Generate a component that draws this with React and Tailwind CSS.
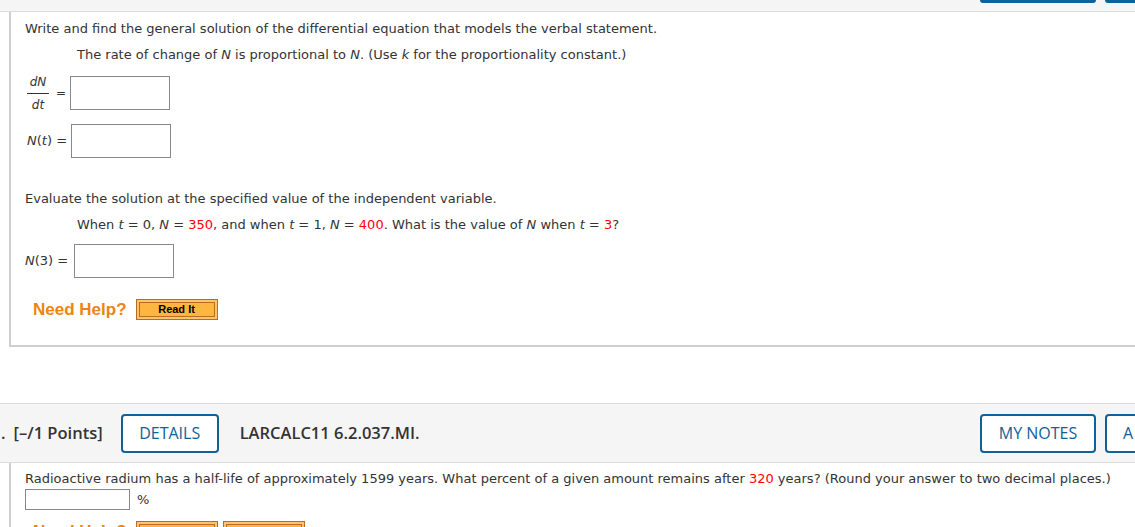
import React from "react";

const body = { fontFamily: '"DejaVu Sans", Verdana, sans-serif' };
const head = { fontFamily: '"Open Sans", Arial, sans-serif' };
const arial = { fontFamily: '"Liberation Sans", Arial, sans-serif' };

function V({ children }) {
    return <i className="italic">{children}</i>;
}

function R({ children }) {
    return <span className="text-[#ff0000]">{children}</span>;
}

function Box({ className }) {
    return <div className={"border border-[#888] bg-white " + className} />;
}

function OutlineBtn({ children, className }) {
    return (
        <div
            className={
                "flex items-center justify-center border-2 border-[#0e6199] rounded-[4px] text-[#0e6199] text-[16px] bg-white " +
                className
            }
            style={head}
        >
            {children}
        </div>
    );
}

function OrangeBtn({ children }) {
    return (
        <div className="w-[82px] h-[21px] border border-[#b86e1c] bg-[#ffc46b] p-[2px] shrink-0">
            <div
                className="h-full border border-[#b86e1c] bg-[#ffb640] flex items-center justify-center text-[11px] font-bold text-black"
                style={arial}
            >
                {children}
            </div>
        </div>
    );
}

function NeedHelp({ children }) {
    return (
        <div className="ml-[8px] flex items-center gap-[9px]">
            <span className="text-[17px] font-bold text-[#ed8510] leading-[20px]" style={arial}>
                Need Help?
            </span>
            <div className="flex gap-[5px]">{children}</div>
        </div>
    );
}

export default function App() {
    return (
        <div className="w-[1135px] h-[527px] overflow-hidden bg-white text-[#333]" style={body}>
            {/* top header strip */}
            <div className="h-[12px] bg-[#f5f5f5] border-b border-[#dcdcdc] flex justify-end gap-[9px] overflow-hidden">
                <div className="w-[116px] h-[3px] bg-[#0e6199] rounded-b-[3px]" />
                <div className="w-[30px] h-[3px] bg-[#0e6199] rounded-bl-[3px]" />
            </div>

            {/* question panel */}
            <div className="ml-[9px] border-l-2 border-b-2 border-[#cfcfcf] h-[335px] pl-[14px] pt-[9px] text-[13px]">
                <p className="leading-[16px]">Write and find the general solution of the differential equation that models the verbal statement.</p>
                <p className="mt-[10px] ml-[52px] leading-[16px]">
                    The rate of change of <V>N</V> is proportional to <V>N</V>. (Use <V>k</V> for the proportionality constant.)
                </p>

                <div className="mt-[10px] flex items-center">
                    <div className="flex flex-col items-center text-[12px] leading-[14px] w-[22px] ml-[2px] pt-[2px]">
                        <span className="italic">dN</span>
                        <span className="block w-[22px] h-px bg-[#333] my-[4px]" />
                        <span className="italic">dt</span>
                    </div>
                    <span className="ml-[7px] mr-[4px] text-[12px]">=</span>
                    <Box className="w-[100px] h-[34px]" />
                </div>

                <div className="mt-[12px] flex items-center">
                    <span className="mr-[4px] ml-[2px]"><V>N</V>(<V>t</V>) =</span>
                    <Box className="w-[100px] h-[34px]" />
                </div>

                <p className="mt-[33px] leading-[16px]">Evaluate the solution at the specified value of the independent variable.</p>
                <p className="mt-[10px] ml-[52px] leading-[16px]">
                    When <V>t</V> = 0, <V>N</V> = <R>350</R>, and when <V>t</V> = 1, <V>N</V> = <R>400</R>. What is the value of <V>N</V> when <V>t</V> = <R>3</R>?
                </p>

                <div className="mt-[11px] flex items-center">
                    <span className="mr-[6px]"><V>N</V>(3) =</span>
                    <Box className="w-[100px] h-[34px]" />
                </div>

                <div className="mt-[21px]">
                    <NeedHelp>
                        <OrangeBtn>Read It</OrangeBtn>
                    </NeedHelp>
                </div>
            </div>

            {/* next question header */}
            <div className="mt-[56px] h-[60px] bg-[#f5f5f5] border-y border-[#dcdcdc] flex items-center text-[16.5px]" style={head}>
                <span className="ml-[1px] font-semibold text-[#333]">.</span>
                <span className="ml-[8px] font-semibold text-[#333]">[–/1 Points]</span>
                <OutlineBtn className="ml-[18px] w-[98px] h-[39px]">DETAILS</OutlineBtn>
                <span className="ml-[21px] font-semibold text-[#333]">LARCALC11 6.2.037.MI.</span>
                <div className="flex-1" />
                <OutlineBtn className="w-[116px] h-[39px] shrink-0">MY NOTES</OutlineBtn>
                <OutlineBtn className="ml-[9px] w-[60px] h-[39px] justify-start pl-[16px] -mr-[30px] shrink-0">A</OutlineBtn>
            </div>

            {/* next question body */}
            <div className="ml-[9px] border-l-2 border-[#cfcfcf] pl-[14px] pt-[8px] text-[13px] h-[80px]">
                <p className="leading-[16px]">
                    Radioactive radium has a half-life of approximately 1599 years. What percent of a given amount remains after <R>320</R> years? (Round your answer to two decimal places.)
                </p>
                <div className="mt-[2px] flex items-center">
                    <Box className="w-[105px] h-[21px]" />
                    <span className="ml-[7px]">%</span>
                </div>
                <div className="mt-[11px]">
                    <NeedHelp>
                        <OrangeBtn>Read It</OrangeBtn>
                        <OrangeBtn>Watch It</OrangeBtn>
                    </NeedHelp>
                </div>
            </div>
        </div>
    );
}
